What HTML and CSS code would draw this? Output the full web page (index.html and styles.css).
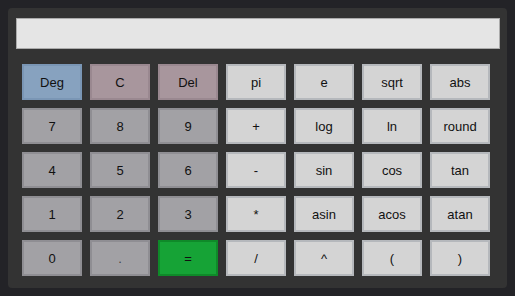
FILE: index.html
```html
<!DOCTYPE html>
<html lang="en">
<head>
    <meta charset="UTF-8">
    <meta name="viewport" content="width=device-width, initial-scale=1.0">
    <title>Calculator</title>
    <link rel="stylesheet" href="styles.css">
</head>
<body>
    <div class="calculator">
        <input type="text" class="display" id="display" readonly>

        <div class="keys">
            <button class="key mode">Deg</button>
            <button class="key clear">C</button>
            <button class="key clear">Del</button>
            <button class="key fn">pi</button>
            <button class="key fn">e</button>
            <button class="key fn">sqrt</button>
            <button class="key fn">abs</button>

            <button class="key num">7</button>
            <button class="key num">8</button>
            <button class="key num">9</button>
            <button class="key fn">+</button>
            <button class="key fn">log</button>
            <button class="key fn">ln</button>
            <button class="key fn">round</button>

            <button class="key num">4</button>
            <button class="key num">5</button>
            <button class="key num">6</button>
            <button class="key fn">-</button>
            <button class="key fn">sin</button>
            <button class="key fn">cos</button>
            <button class="key fn">tan</button>

            <button class="key num">1</button>
            <button class="key num">2</button>
            <button class="key num">3</button>
            <button class="key fn">*</button>
            <button class="key fn">asin</button>
            <button class="key fn">acos</button>
            <button class="key fn">atan</button>

            <button class="key num">0</button>
            <button class="key num dot">.</button>
            <button class="key equals">=</button>
            <button class="key fn">/</button>
            <button class="key fn">^</button>
            <button class="key fn">(</button>
            <button class="key fn">)</button>
        </div>
    </div>
</body>
</html>
```

FILE: styles.css
```css
body {
    margin: 8px;
    background: #232327;
    font-family: 'Liberation Sans', Arial, sans-serif;
}

.calculator {
    background: #333333;
    border-radius: 4px;
    padding: 10px 8px 12px 8px;
}

.display {
    display: block;
    box-sizing: border-box;
    width: 484px;
    height: 31px;
    margin: 0;
    padding: 0 6px;
    background: #e5e5e5;
    border: 1px solid #ababab;
    font-family: inherit;
    font-size: 16px;
}

.keys {
    display: grid;
    grid-template-columns: repeat(7, 60px);
    grid-auto-rows: 36px;
    gap: 8px;
    margin-top: 15px;
    padding-left: 6px;
}

.key {
    box-sizing: border-box;
    margin: 0;
    padding: 0;
    border: 2px solid;
    font-family: inherit;
    font-size: 13px;
    color: #111;
    cursor: pointer;
}

.mode {
    background: #87a2bf;
    border-color: #7a96b5;
}

.clear {
    background: #a8969d;
    border-color: #9a8890;
}

.num {
    background: #a2a1a5;
    border-color: #8f8e93;
}

.dot {
    color: #444;
}

.fn {
    background: #d4d4d4;
    border-color: #b5b8bc;
}

.equals {
    background: #16a336;
    border-color: #0f8a29;
}
```
